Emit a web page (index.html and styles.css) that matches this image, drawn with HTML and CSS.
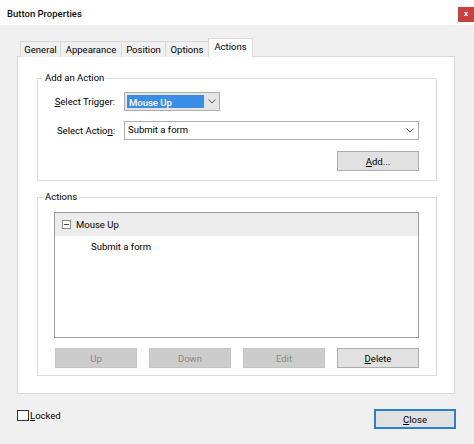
FILE: index.html
```html
<!DOCTYPE html>
<html>
<head>
<meta charset="utf-8">
<title>Button Properties</title>
<link rel="stylesheet" href="styles.css">
</head>
<body>
<div class="dialog">
  <div class="titlebar">
    <span class="title">Button Properties</span>
    <span class="close-x">x</span>
  </div>
  <div class="main">
    <div class="tabs">
      <span class="tab tab-general">General</span>
      <span class="tab tab-appearance">Appearance</span>
      <span class="tab tab-position">Position</span>
      <span class="tab tab-options">Options</span>
      <span class="tab tab-actions active">Actions</span>
    </div>
    <div class="panel">
      <fieldset class="group add-group">
        <legend>Add an Action</legend>
        <div class="form-grid">
          <label class="lbl"><u>S</u>elect Trigger:</label>
          <div class="combo combo-trigger">
            <span class="combo-val selected">Mouse Up</span>
            <span class="combo-arrow"><svg width="8" height="5" viewBox="0 0 8 5"><polyline points="0.5,0.5 4,4 7.5,0.5" fill="none" stroke="#555" stroke-width="1"/></svg></span>
          </div>
          <label class="lbl">Select Actio<u>n</u>:</label>
          <div class="combo combo-action">
            <span class="combo-val">Submit a form</span>
            <span class="combo-arrow"><svg width="8" height="5" viewBox="0 0 8 5"><polyline points="0.5,0.5 4,4 7.5,0.5" fill="none" stroke="#555" stroke-width="1"/></svg></span>
          </div>
        </div>
        <div class="add-row"><button class="btn"><u>A</u>dd...</button></div>
      </fieldset>
      <fieldset class="group list-group">
        <legend>Actions</legend>
        <div class="listbox">
          <div class="list-head">
            <svg class="collapse-box" width="9" height="9" viewBox="0 0 9 9"><rect x="0.5" y="0.5" width="8" height="8" fill="#fff" stroke="#8a8a8a"/><line x1="2" y1="4.5" x2="7" y2="4.5" stroke="#444"/></svg>
            <span>Mouse Up</span>
          </div>
          <div class="list-item">Submit a form</div>
        </div>
        <div class="btn-row">
          <button class="btn disabled">Up</button>
          <button class="btn disabled">Down</button>
          <button class="btn disabled">Edit</button>
          <button class="btn"><u>D</u>elete</button>
        </div>
      </fieldset>
    </div>
    <div class="footer">
      <label class="check"><span class="checkbox"></span><span><u>L</u>ocked</span></label>
      <button class="btn default"><u>C</u>lose</button>
    </div>
  </div>
</div>
</body>
</html>
```
FILE: styles.css
```css
html, body {
  margin: 0;
  padding: 0;
}
body {
  background: #f0f0f0;
  font-family: Roboto, "Open Sans", sans-serif;
  font-size: 9.5px;
  color: #000;
  width: 474px;
  height: 444px;
  overflow: hidden;
}
u { text-decoration: underline; text-underline-offset: 1px; }

.titlebar {
  height: 25px;
  background: #fff;
  display: flex;
  justify-content: space-between;
  align-items: flex-start;
}
.title {
  padding-left: 7px;
  line-height: 27px;
  font-weight: 500;
  color: #111;
}
.close-x {
  width: 16px;
  height: 15px;
  margin-top: 7px;
  background: #c8413f;
  color: #fff;
  font-size: 8px;
  font-weight: 700;
  line-height: 14px;
  text-align: center;
}

.main {
  padding: 14px 19px 0 17px;
}
.tabs {
  display: flex;
  align-items: flex-end;
  height: 18px;
  padding-left: 3px;
  margin-bottom: -1px;
  position: relative;
  z-index: 1;
}
.tab {
  height: 16px;
  box-sizing: border-box;
  border: 1px solid #d9d9d9;
  border-bottom: none;
  background: #f0f0f0;
  line-height: 15px;
  text-align: center;
  margin-left: -1px;
}
.tab:first-child { margin-left: 0; }
.tab-general { width: 41px; }
.tab-appearance { width: 62px; }
.tab-position { width: 45px; }
.tab-options { width: 44px; }
.tab-actions { width: 45px; }
.tab.active {
  height: 19px;
  background: #fff;
  line-height: 15px;
  padding-bottom: 3px;
}

.panel {
  background: #fff;
  border: 1px solid #d9d9d9;
  height: 338px;
  box-sizing: border-box;
  padding: 14px 17px 0 19px;
}
.group {
  margin: 0;
  border: 1px solid #dcdcdc;
  padding: 0 17px 9px 0;
  min-width: 0;
}
.group legend {
  margin-left: 5px;
  padding: 0 2px;
  line-height: 14px;
}
.list-group {
  margin-top: 9px;
  padding-bottom: 7px;
}

.form-grid {
  display: grid;
  grid-template-columns: 77px 1fr;
  column-gap: 9px;
  row-gap: 10px;
  margin-top: 7px;
  align-items: center;
}
.lbl {
  text-align: right;
}
.combo {
  height: 19px;
  box-sizing: border-box;
  border: 1px solid #adadad;
  display: flex;
  align-items: stretch;
}
.combo-trigger {
  width: 96px;
  background: #e5e5e5;
  padding: 2px 0 2px 2px;
}
.combo-action {
  background: #fff;
}
.combo-val {
  flex: 1;
  line-height: 15px;
  padding-left: 3px;
}
.combo-val.selected {
  background: #3a8ee6;
  color: #fff;
  padding-left: 2px;
  font-weight: 500;
}
.combo-arrow {
  width: 15px;
  display: flex;
  align-items: center;
  justify-content: center;
}
.combo-action .combo-arrow {
  width: 17px;
}

.add-row {
  display: flex;
  justify-content: flex-end;
  margin-top: 11px;
}
.btn {
  width: 82px;
  height: 20px;
  box-sizing: border-box;
  border: 1px solid #adadad;
  background: #e1e1e1;
  font: inherit;
  color: #000;
  padding: 0;
  margin: 0;
}
.btn.disabled {
  background: #cccccc;
  border-color: #c4c4c4;
  color: #8a8a8a;
}
.btn.default {
  border: 1px solid #2a7fd4;
  box-shadow: inset 0 0 0 1px #2a7fd4;
  margin-right: -1px;
}

.listbox {
  margin: 8px 0 0 16px;
  height: 126px;
  box-sizing: border-box;
  border: 1px solid #9c9c9c;
  background: #fff;
}
.list-head {
  height: 23px;
  background: #ececec;
  display: flex;
  align-items: center;
  padding-left: 7px;
  gap: 5px;
}
.collapse-box {
  display: block;
}
.list-item {
  padding-left: 36px;
  line-height: 22px;
}
.btn-row {
  display: grid;
  grid-template-columns: repeat(4, 82px);
  column-gap: 12px;
  margin: 10px 0 0 17px;
}

.footer {
  display: flex;
  justify-content: space-between;
  align-items: flex-start;
  margin-top: 15px;
}
.check {
  display: flex;
  align-items: center;
  gap: 1px;
  margin-top: 1px;
}
.checkbox {
  width: 12px;
  height: 11px;
  box-sizing: border-box;
  border: 1px solid #333;
  background: #fff;
}
```
